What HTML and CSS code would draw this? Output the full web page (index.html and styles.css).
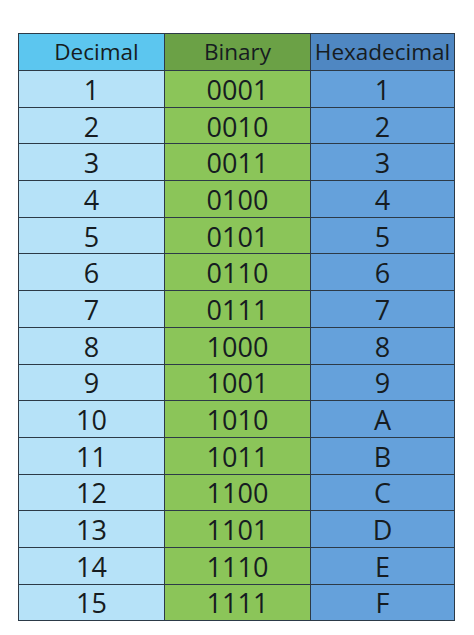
FILE: index.html
```html
<!DOCTYPE html>
<html>
<head>
<meta charset="utf-8">
<link rel="stylesheet" href="styles.css">
</head>
<body>
<div class="table">
  <div class="cell head dec first">Decimal</div>
  <div class="cell head bin">Binary</div>
  <div class="cell head hex">Hexadecimal</div>

  <div class="cell dec">1</div><div class="cell bin">0001</div><div class="cell hex">1</div>
  <div class="cell dec">2</div><div class="cell bin">0010</div><div class="cell hex">2</div>
  <div class="cell dec">3</div><div class="cell bin">0011</div><div class="cell hex">3</div>
  <div class="cell dec">4</div><div class="cell bin">0100</div><div class="cell hex">4</div>
  <div class="cell dec">5</div><div class="cell bin">0101</div><div class="cell hex">5</div>
  <div class="cell dec">6</div><div class="cell bin">0110</div><div class="cell hex">6</div>
  <div class="cell dec">7</div><div class="cell bin">0111</div><div class="cell hex">7</div>
  <div class="cell dec">8</div><div class="cell bin">1000</div><div class="cell hex">8</div>
  <div class="cell dec">9</div><div class="cell bin">1001</div><div class="cell hex">9</div>
  <div class="cell dec">10</div><div class="cell bin">1010</div><div class="cell hex">A</div>
  <div class="cell dec">11</div><div class="cell bin">1011</div><div class="cell hex">B</div>
  <div class="cell dec">12</div><div class="cell bin">1100</div><div class="cell hex">C</div>
  <div class="cell dec">13</div><div class="cell bin">1101</div><div class="cell hex">D</div>
  <div class="cell dec">14</div><div class="cell bin">1110</div><div class="cell hex">E</div>
  <div class="cell dec">15</div><div class="cell bin">1111</div><div class="cell hex">F</div>
</div>
</body>
</html>
```

FILE: styles.css
```css
html, body {
  margin: 0;
  padding: 0;
  background: #ffffff;
}

body {
  padding: 33px 0 0 18px;
  font-family: "Open Sans", "Noto Sans", sans-serif;
  color: #161c21;
}

.table {
  display: grid;
  grid-template-columns: 145px 145px 143px;
  grid-template-rows: 36px repeat(15, 35.7px);
  gap: 1px;
  padding: 1px;
  width: max-content;
  background: #2c3a47;
}

.cell {
  display: flex;
  align-items: center;
  justify-content: center;
  font-size: 27px;
  font-weight: 500;
  line-height: 1;
  padding-top: 1px;
}

.head {
  font-size: 22.5px;
  padding-top: 0;
}

.head.first {
  padding-left: 10px;
}

.dec { background: #b6e2f8; }
.bin { background: #8bc559; }
.hex { background: #65a1db; }

.head.dec { background: #5cc6ef; }
.head.bin { background: #6ba146; }
.head.hex { background: #4f87c2; }
```
